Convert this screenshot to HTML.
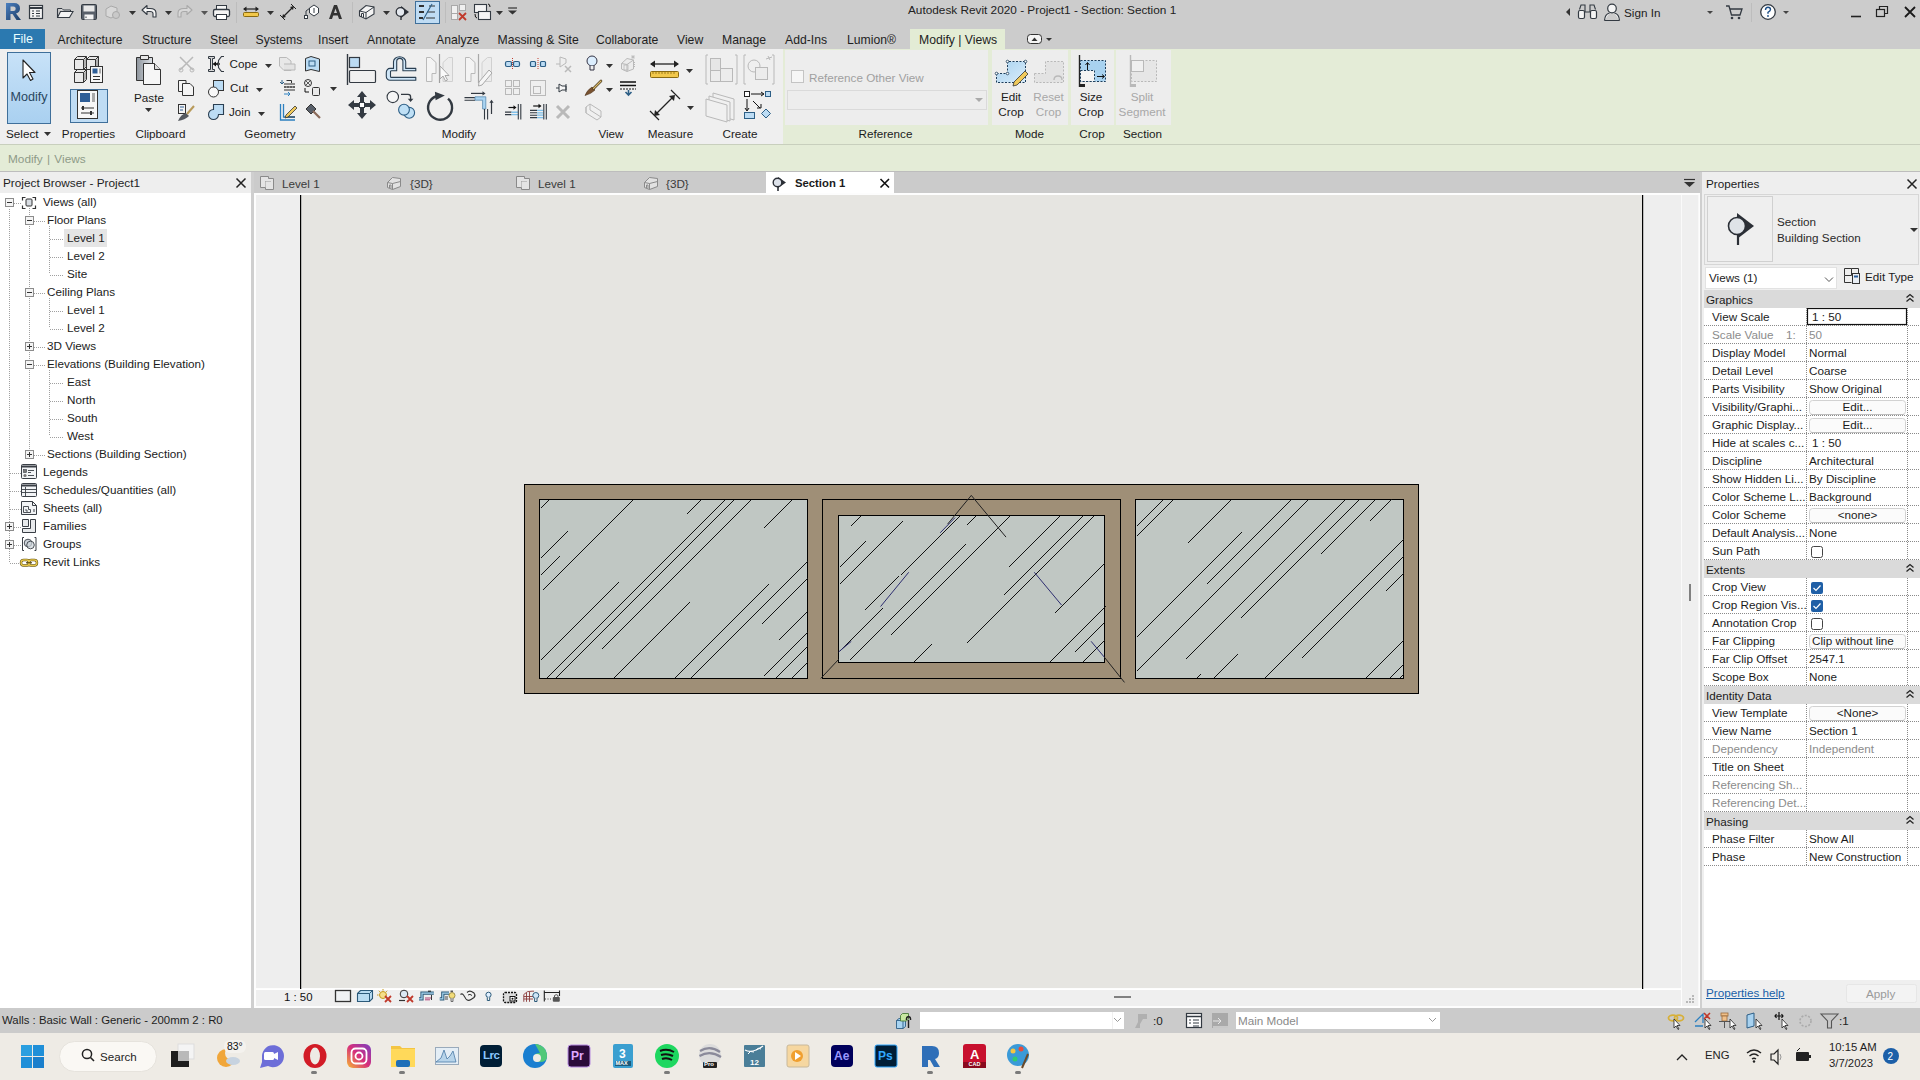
<!DOCTYPE html>
<html><head><meta charset="utf-8">
<style>
*{margin:0;padding:0;box-sizing:border-box}
html,body{width:1920px;height:1080px;overflow:hidden;background:#cccccc;font-family:"Liberation Sans",sans-serif;font-size:12px;color:#1e1e1e}
.a{position:absolute}
.t{position:absolute;white-space:nowrap;line-height:14px}
svg{position:absolute;overflow:visible}
</style></head><body>
<!-- title + tab bar -->
<div class="a" style="left:0;top:0;width:1920px;height:49px;background:#cccccc"></div>
<div class="t" style="left:908px;top:3px;font-size:11.8px;color:#222">Autodesk Revit 2020 - Project1 - Section: Section 1</div>

<!-- tabs -->
<div class="a" style="left:0;top:29px;width:45px;height:20px;background:#2b79b0"></div>
<div class="t" style="left:13px;top:32px;color:#eaffff;font-size:12.4px">File</div>
<div class="a" style="left:910px;top:29px;width:95px;height:20px;background:#e3ecd5;"></div>
<svg class="a" style="left:0;top:0" width="1920" height="50"><defs><linearGradient id="rl" x1="0" y1="0" x2="1" y2="1"><stop offset="0" stop-color="#4a7fc0"/><stop offset="1" stop-color="#1c3d66"/></linearGradient></defs><path d="M6 3H14Q20 3 20 8.5Q20 12.5 16 13.5L21 20H16.5L12.5 14H10.5V20H6Z M10.5 6.5V11H13.5Q15.7 11 15.7 8.7Q15.7 6.5 13.5 6.5Z" fill="url(#rl)" fill-rule="evenodd"/><rect x="29.5" y="5.5" width="13" height="13" fill="#f4f4f4" stroke="#333a42" stroke-width="1.2"/><path d="M29.5 8H42.5" stroke="#333a42" stroke-width="2"/><path d="M32 11H34M32 13.5H34M32 16H34M36 11H40M36 13.5H40M36 16H40" stroke="#333a42"/><path d="M57.5 8.5H62L63.5 10H70.5V12" stroke="#333a42" fill="#e8e8e8"/><path d="M57.5 8.5V17.5H69.5L73 11.5H60.5L57.5 17.5" stroke="#333a42" fill="#f4f4f4" stroke-width="1.1"/><rect x="81.5" y="4.5" width="15" height="15" rx="1" fill="#59606a" stroke="#333a42"/><rect x="83.5" y="5.5" width="11" height="6" fill="#e8e8e8"/><rect x="84.5" y="14.5" width="9" height="5" fill="#f4f4f4"/><path d="M86 16.5V18" stroke="#333a42"/><path d="M106 9L111 6L117 8V15L111 18L106 16Z" fill="#d8d8d8" stroke="#a9a9a9"/><circle cx="116" cy="15" r="3.5" fill="#c9c9c9" stroke="#a9a9a9"/><path d="M129 11H136L132.5 15Z" fill="#333"/><path d="M142 10L147 5.5V8.5H150Q156 8.5 156 13V17H153V13.5Q153 11.5 150 11.5H147V14.5Z" fill="#f4f4f4" stroke="#333a42" stroke-width="1.1" stroke-linejoin="round"/><path d="M165 11H172L168.5 15Z" fill="#333"/><path d="M192 10L187 5.5V8.5H184Q178 8.5 178 13V17H181V13.5Q181 11.5 184 11.5H187V14.5Z" fill="#d8d8d8" stroke="#a9a9a9" stroke-width="1.1" stroke-linejoin="round"/><path d="M201 11H208L204.5 15Z" fill="#555"/><rect x="216.5" y="5.5" width="10" height="4" fill="#f4f4f4" stroke="#333a42"/><rect x="213.5" y="9.5" width="16" height="7" rx="1.5" fill="#f4f4f4" stroke="#333a42" stroke-width="1.3"/><rect x="216.5" y="14.5" width="10" height="5" fill="#fff" stroke="#333a42"/><path d="M236.5 2V23" stroke="#bdbdbd"/><path d="M244 9H258" stroke="#222" stroke-width="1.2"/><path d="M243 9L246.5 6.5V11.5Z M259 9L255.5 6.5V11.5Z" fill="#222"/><rect x="243.5" y="12.5" width="15" height="4" rx="1" fill="#f2c84b" stroke="#8a6a10"/><path d="M267 11H274L270.5 15Z" fill="#333"/><path d="M283 17L293 7" stroke="#222" stroke-width="1.2"/><path d="M280 15L285 20M291 4L296 9" stroke="#222"/><path d="M282 18L283 14L286 17Z M294 6L293 10L290 7Z" fill="#222"/><path d="M306 17V11L310 8" stroke="#333a42" fill="none"/><rect x="304.5" y="15.5" width="3" height="3" fill="#fff" stroke="#333a42"/><path d="M309.5 8L314 5L318.5 8V13L314 16L309.5 13Z" fill="#fff" stroke="#333a42"/><path d="M314 8V13" stroke="#333a42"/><path d="M329 19L334 5H337L342 19H339L337.8 15.5H333.2L332 19Z M334 13H337L335.5 8.5Z" fill="#333" fill-rule="evenodd"/><path d="M352.5 2V23" stroke="#bdbdbd"/><path d="M359.5 11L366 5.5L374 7V14L366 19L359.5 16Z" fill="#f4f4f4" stroke="#333a42" stroke-width="1.1"/><path d="M359.5 11L366 12.5L374 7M366 12.5V19" stroke="#333a42" fill="none"/><path d="M361.5 17V13.5H363.5V17.5" stroke="#333a42" fill="none"/><path d="M383 11H390L386.5 15Z" fill="#333"/><path d="M401 6L409 12L401 18Z" fill="#2b2f36"/><circle cx="400.5" cy="12" r="4.3" fill="#e4e8ee" stroke="#2b2f36" stroke-width="1.3"/><path d="M401 16V20" stroke="#2b2f36" stroke-width="1.4"/><rect x="415.5" y="1.5" width="24" height="22" fill="#bfdcf4" stroke="#3f6f9a"/><path d="M419 6H424M419 12H424M419 18H423" stroke="#333" stroke-width="2.2"/><path d="M429 6H435M427 12H435M426 18H435" stroke="#333" stroke-width="1.1"/><path d="M432 4L423 20" stroke="#2d5f86" stroke-width="1.1"/><path d="M445.5 2V23" stroke="#bdbdbd"/><rect x="451.5" y="5.5" width="6" height="8" fill="#f0f0f0" stroke="#a9a9a9"/><rect x="459.5" y="4.5" width="6" height="6" fill="#f0f0f0" stroke="#a9a9a9"/><rect x="451.5" y="13.5" width="6" height="6" fill="#f0f0f0" stroke="#a9a9a9"/><path d="M459 13L466 20M466 13L459 20" stroke="#c0392b" stroke-width="1.8"/><rect x="474.5" y="4.5" width="12" height="8" fill="#f4f4f4" stroke="#333a42" stroke-width="1.1"/><rect x="478.5" y="11.5" width="12" height="8" fill="#f4f4f4" stroke="#333a42" stroke-width="1.1"/><path d="M488 4Q490 4 490 7M475 14Q475 18 477 18" stroke="#111" fill="none"/><path d="M496 11H503L499.5 15Z" fill="#333"/><path d="M508 8H517" stroke="#333" stroke-width="1.2"/><path d="M508 10.5H517L512.5 14.5Z" fill="#333"/><path d="M1570 8V16L1566 12Z" fill="#333"/><path d="M1579.5 9.5L1581 5H1585V12M1590 12V5H1594L1595.5 9.5" stroke="#333a42" fill="none" stroke-width="1.1"/><rect x="1578.5" y="10.5" width="6" height="8" rx="1.5" fill="#f4f4f4" stroke="#333a42" stroke-width="1.2"/><rect x="1590.5" y="10.5" width="6" height="8" rx="1.5" fill="#f4f4f4" stroke="#333a42" stroke-width="1.2"/><path d="M1584.5 12H1590.5" stroke="#333a42"/><circle cx="1612" cy="8.5" r="4.3" fill="#f4f4f4" stroke="#333a42" stroke-width="1.2"/><path d="M1604.5 20.5Q1605 14 1609.5 13M1619.5 20.5Q1619 14 1614.5 13M1604.5 20.5H1619.5" stroke="#333a42" fill="#f4f4f4" stroke-width="1.2"/><path d="M1707 11H1713L1710 14Z" fill="#444"/><path d="M1726 6H1729L1731.5 15H1740L1742 9H1730" stroke="#333a42" fill="none" stroke-width="1.3"/><circle cx="1732" cy="18" r="1.3" fill="#333a42"/><circle cx="1739" cy="18" r="1.3" fill="#333a42"/><path d="M1751.5 3V22" stroke="#bdbdbd"/><circle cx="1768" cy="12" r="7.3" fill="#fff" stroke="#333a42" stroke-width="1.3"/><path d="M1765.5 10Q1765.5 7.2 1768 7.2Q1770.5 7.2 1770.5 9.5Q1770.5 11 1768 12.3V13.8" stroke="#1d4f86" fill="none" stroke-width="1.4"/><circle cx="1768" cy="16" r="0.9" fill="#1d4f86"/><path d="M1783 11H1789L1786 14Z" fill="#444"/><path d="M1851 16.5H1861" stroke="#222" stroke-width="1.6"/><rect x="1876.5" y="9.5" width="8" height="7" fill="none" stroke="#222" stroke-width="1.2"/><path d="M1879.5 9V6.5H1887.5V13.5H1885" stroke="#222" fill="none" stroke-width="1.2"/><path d="M1905 7L1915 17M1915 7L1905 17" stroke="#1a1a1a" stroke-width="1.8"/><rect x="1027.5" y="34.5" width="14" height="9" rx="3" fill="#f4f4f4" stroke="#333"/><path d="M1031.5 41L1034.5 37.5L1037.5 41Z" fill="#333"/><path d="M1046 38H1052L1049 41Z" fill="#333"/></svg>
<div class="t" style="left:1624px;top:7.10px;font-size:11.7px;line-height:11.7px;color:#222;">Sign In</div>
<div class="t" style="left:57.5px;top:33.67px;font-size:12.2px;line-height:12.2px;color:#1e1e1e;">Architecture</div>
<div class="t" style="left:142px;top:33.67px;font-size:12.2px;line-height:12.2px;color:#1e1e1e;">Structure</div>
<div class="t" style="left:210px;top:33.67px;font-size:12.2px;line-height:12.2px;color:#1e1e1e;">Steel</div>
<div class="t" style="left:255.5px;top:33.67px;font-size:12.2px;line-height:12.2px;color:#1e1e1e;">Systems</div>
<div class="t" style="left:318px;top:33.67px;font-size:12.2px;line-height:12.2px;color:#1e1e1e;">Insert</div>
<div class="t" style="left:367px;top:33.67px;font-size:12.2px;line-height:12.2px;color:#1e1e1e;">Annotate</div>
<div class="t" style="left:436px;top:33.67px;font-size:12.2px;line-height:12.2px;color:#1e1e1e;">Analyze</div>
<div class="t" style="left:497.5px;top:33.67px;font-size:12.2px;line-height:12.2px;color:#1e1e1e;">Massing &amp; Site</div>
<div class="t" style="left:596px;top:33.67px;font-size:12.2px;line-height:12.2px;color:#1e1e1e;">Collaborate</div>
<div class="t" style="left:677px;top:33.67px;font-size:12.2px;line-height:12.2px;color:#1e1e1e;">View</div>
<div class="t" style="left:722px;top:33.67px;font-size:12.2px;line-height:12.2px;color:#1e1e1e;">Manage</div>
<div class="t" style="left:785px;top:33.67px;font-size:12.2px;line-height:12.2px;color:#1e1e1e;">Add-Ins</div>
<div class="t" style="left:847px;top:33.67px;font-size:12.2px;line-height:12.2px;color:#1e1e1e;">Lumion®</div>
<div class="t" style="left:919px;top:33.67px;font-size:12.2px;line-height:12.2px;color:#1e1e1e;">Modify | Views</div>


<!-- ribbon body -->
<div class="a" style="left:0;top:49px;width:1920px;height:96px;background:#e4ecd7"></div>
<div class="a" style="left:0;top:49px;width:783px;height:96px;background:#efefef"></div>
<div class="a" style="left:785px;top:50px;width:203px;height:75px;background:#ededed"></div>
<div class="a" style="left:992px;top:50px;width:76px;height:75px;background:#ededed"></div>
<div class="a" style="left:1071px;top:50px;width:43px;height:75px;background:#ededed"></div>
<div class="a" style="left:1116px;top:50px;width:55px;height:75px;background:#ededed"></div>
<div class="a" style="left:0;top:144px;width:1920px;height:1px;background:#c8cfbd"></div>
<svg class="a" style="left:0;top:0" width="1920" height="160"><defs><linearGradient id="mb" x1="0" y1="0" x2="0" y2="1"><stop offset="0" stop-color="#c8e2f8"/><stop offset="1" stop-color="#a9d0f0"/></linearGradient></defs><rect x="7.5" y="52.5" width="43" height="71" fill="url(#mb)" stroke="#3f6f9a"/><path d="M23 60V78L27 74L30.5 80.5L33 79L29.5 72.5H35Z" fill="#fff" stroke="#222" stroke-width="1.1" stroke-linejoin="round"/><path d="M44 132H51L47.5 136Z" fill="#333"/><path d="M74.5 59.5L77.5 56.5H86.5V66.5L83.5 69.5H74.5Z" fill="#e9e9e9" stroke="#333"/><path d="M74.5 59.5H83.5V69.5M83.5 59.5L86.5 56.5" stroke="#333" fill="none"/><path d="M84 60L86 58V66L84 68Z" fill="#b0b0b0"/><path d="M86.5 59.5L89.5 56.5H98.5V66.5L95.5 69.5H86.5Z" fill="#e9e9e9" stroke="#333"/><path d="M86.5 59.5H95.5V69.5M95.5 59.5L98.5 56.5" stroke="#333" fill="none"/><path d="M96 60L98 58V66L96 68Z" fill="#b0b0b0"/><path d="M74.5 72.5L77.5 69.5H86.5V79.5L83.5 82.5H74.5Z" fill="#e9e9e9" stroke="#333"/><path d="M74.5 72.5H83.5V82.5M83.5 72.5L86.5 69.5" stroke="#333" fill="none"/><path d="M84 73L86 71V79L84 81Z" fill="#b0b0b0"/><rect x="90.5" y="66.5" width="12" height="16" fill="#f7f7f7" stroke="#333"/><rect x="92.5" y="68.5" width="5" height="5" fill="#2e5e97"/><rect x="99" y="68.5" width="2" height="5" fill="#aaa"/><path d="M93 76.5H100M93 79.5H100" stroke="#333"/><rect x="70.5" y="89.5" width="37" height="33" fill="#bfdcf4" stroke="#3f6f9a"/><rect x="77.5" y="90.5" width="20" height="28" fill="#f7f7f7" stroke="#333"/><rect x="80" y="93" width="10" height="9" fill="#2e5e97"/><rect x="92" y="93" width="3" height="9" fill="#aaa"/><path d="M81 108H94M81 113H94" stroke="#333" stroke-width="1.2"/><path d="M83 106V110M91 111V115" stroke="#333" stroke-width="2"/><defs><linearGradient id="pg" x1="0" y1="0" x2="1" y2="0"><stop offset="0" stop-color="#8c939b"/><stop offset="1" stop-color="#dfe3e8"/></linearGradient></defs><path d="M136.5 57.5H152.5V80.5H136.5Z" fill="url(#pg)" stroke="#333"/><path d="M140.5 55.5H148.5V59.5H140.5Z" fill="#e8e8e8" stroke="#333"/><path d="M143.5 63.5H154.5L160.5 69.5V84.5H143.5Z" fill="#f6f6f6" stroke="#333"/><path d="M154.5 63.5V69.5H160.5" fill="#ddd" stroke="#333"/><path d="M145 108H152L148.5 112Z" fill="#333"/><path d="M180 57L193 70M193 57L180 70" stroke="#b9b9b9" stroke-width="1.5"/><circle cx="181" cy="70" r="2" fill="none" stroke="#b9b9b9"/><circle cx="192" cy="70" r="2" fill="none" stroke="#b9b9b9"/><path d="M178.5 80.5H186V91.5H178.5Z" fill="#f4f4f4" stroke="#333"/><path d="M182.5 83.5H190L193.5 87V95.5H182.5Z" fill="#f4f4f4" stroke="#333"/><rect x="178.5" y="104.5" width="7" height="9" fill="#f4f4f4" stroke="#333"/><path d="M180 107H184M180 110H183" stroke="#2e5e97"/><path d="M178 121Q181 114 186 113L189 116Q185 120 178 121Z" fill="#555a60"/><path d="M187 114L194 106" stroke="#b89a5a" stroke-width="2"/><path d="M208.5 56.5H214.5V58.5H212.5V69.5H214.5V71.5H208.5V69.5H210.5V58.5H208.5Z" fill="#d8d8d8" stroke="#333a42" stroke-width="1"/><path d="M224 56.5H221.5L218.5 60.5V62.5L216.5 64L218.5 65.5V67.5L221.5 71.5H224" stroke="#333a42" fill="none" stroke-width="1.1"/><path d="M220 64H214" stroke="#111" stroke-width="1.3"/><path d="M212.5 64L216 61.5V66.5Z" fill="#111"/><path d="M265 64H272L268.5 68Z" fill="#333"/><rect x="213.5" y="80.5" width="10" height="10" fill="#bcdcf4" stroke="#333"/><circle cx="213.5" cy="92" r="5" fill="#f8f8f8" stroke="#333"/><path d="M256 88H263L259.5 92Z" fill="#333"/><path d="M213.5 109.5V104.5H223.5V114.5H218.5A5 5 0 1 1 213.5 109.5Z" fill="#bcdcf4" stroke="#2a3f52" stroke-width="1.1"/><path d="M258 112H265L261.5 116Z" fill="#333"/><path d="M279.5 57.5H286.5L291 61V70.5H284L279.5 66Z" fill="#e8e8e8" stroke="#b9b9b9"/><path d="M284 64H295V70H284" stroke="#b9b9b9" fill="#e3e3e3"/><path d="M284 84H295M284 87H295M284 90H295" stroke="#333" stroke-width="1.1"/><path d="M284 87H295" stroke="#333" stroke-dasharray="2 1"/><path d="M282 80L282 84M280 82L282 84L284 82" stroke="#2d5f86" fill="none"/><path d="M286.5 80.5H291.5V83" stroke="#333" fill="none"/><path d="M284 94H290M288 92L290 94L288 96" stroke="#2d80c0" fill="none"/><path d="M280.5 104V120H295M283.5 104V117H295" stroke="#2d80c0" stroke-width="1.3" fill="none"/><path d="M287 117H295" stroke="#333"/><path d="M286 115L295 106L297 108L288 117L285 118Z" fill="#f0c95a" stroke="#333" stroke-width="0.8"/><path d="M305.5 58.5L311 56.5L319.5 59V71.5L311 69.5L305.5 71Z" fill="#bcdcf4" stroke="#333"/><rect x="309" y="61" width="6" height="5" fill="none" stroke="#2d5f86"/><circle cx="308" cy="83" r="3.5" fill="none" stroke="#333"/><path d="M305.5 80.5L310.5 85.5M310.5 80.5L305.5 85.5" stroke="#333" stroke-width="0.8"/><rect x="312.5" y="87.5" width="7" height="8" rx="1" fill="#e8e8e8" stroke="#333"/><path d="M305 88V92H309" stroke="#111" fill="none"/><path d="M306 109L311 104L316 109L311 114Z" fill="#59606a" stroke="#333"/><path d="M313 111L320 118" stroke="#8a6a5a" stroke-width="2.2"/><path d="M330 87H337L333.5 91Z" fill="#333"/><path d="M347.5 54V85" stroke="#333a42" stroke-width="1.4"/><rect x="349.5" y="57.5" width="10" height="10" fill="#bcdcf4" stroke="#333a42" stroke-width="1.2"/><rect x="349.5" y="70.5" width="26" height="12" rx="1" fill="#f0f0f0" stroke="#333a42" stroke-width="1.2"/><path d="M415.8 68.4H405.7V61.8A6.1 5 0 0 0 393.5 61.8V68.4H390A3.6 4 0 0 0 386.3 72.5V76.5A3.6 3.7 0 0 0 390 80.2H415.8V77.4H391.5A1 1 0 0 1 390.5 76.4V72A1 1 0 0 1 391.5 70.8H396.7V61.5A3 3 0 0 1 402.9 61.5V70.8H415.8Z" fill="#cfe6f8" stroke="#2a3f52" stroke-width="1.1" stroke-linejoin="round"/><path d="M426.5 57.5H430.5L436 62.5V73.5H432V81.5H426.5Z" fill="#f4f4f4" stroke="#b9b9b9"/><path d="M439.5 54V83" stroke="#a0a0a0" stroke-width="1.2"/><path d="M443 62.5L448.5 57.5H452.5V81.5H443Z" fill="#ececec" stroke="#d0d0d0"/><path d="M440 66V79L443 76L445.5 81L447.5 80L445 75.5H449Z" fill="#fafafa" stroke="#a8a8a8" stroke-linejoin="round"/><path d="M465.5 57.5H469.5L475 62.5V73.5H471V81.5H465.5Z" fill="#f4f4f4" stroke="#b9b9b9"/><path d="M478.5 54V83" stroke="#a8a8a8" stroke-width="1.2"/><path d="M482 62.5L487.5 57.5H491.5V81.5H482Z" fill="#ececec" stroke="#d0d0d0"/><path d="M479 82L489 70L492 73L482 85L478.5 86Z" fill="#f6f6f6" stroke="#a8a8a8"/><path d="M362 91L367 97H364V103H360V97H357Z M362 119L367 113H364V107H360V113H357Z M348 105L354 100V103H359V107H354V110Z M376 105L370 100V103H365V107H370V110Z" fill="#333a42"/><rect x="359.5" y="102.5" width="5" height="5" fill="#fff" stroke="#333a42"/><circle cx="392.8" cy="96.9" r="5.7" fill="#f6f6f6" stroke="#333a42" stroke-width="1.1"/><path d="M401 94.4H408Q410.6 94.4 410.6 97V99" stroke="#333a42" stroke-width="1.3" fill="none"/><path d="M407.8 98.8H413.4L410.6 102Z" fill="#333a42"/><circle cx="409.2" cy="112.8" r="5.4" fill="#bfe0f6" stroke="#2d5f86" stroke-width="1.1"/><circle cx="404" cy="109.7" r="5.4" fill="#bfe0f6" stroke="#2d5f86" stroke-width="1.1"/><path d="M444.5 96.5A12 12 0 1 1 435 96.8" stroke="#333a42" stroke-width="2.4" fill="none" transform="rotate(20 440 107.6)"/><path d="M434.9 91.7L444.8 95.6L435.6 100.2Z" fill="#333a42"/><path d="M464.5 97.6H475M464.5 100.3H475" stroke="#333a42" stroke-width="1.1"/><path d="M475 96.8H485.8V109H482.6V100.2H475Z" fill="#a9d4f2" stroke="#5a8ab0" stroke-width="0.8"/><path d="M484.5 109V119.5M487.6 109V119.5" stroke="#333a42" stroke-width="1.1"/><path d="M471 93.4H483" stroke="#333a42" stroke-width="1.2"/><path d="M482.5 91.3L485.5 93.4L482.5 95.5Z" fill="#333a42"/><path d="M491.5 114V102" stroke="#333a42" stroke-width="1.2"/><path d="M489.4 102.8L491.5 99.8L493.6 102.8Z" fill="#333a42"/><rect x="505.5" y="61.5" width="6" height="5" rx="1.5" fill="#bcdcf4" stroke="#2d5f86" stroke-width="1.2"/><rect x="513.5" y="61.5" width="6" height="5" rx="1.5" fill="#bcdcf4" stroke="#2d5f86" stroke-width="1.2"/><path d="M512.5 58V70" stroke="#c0392b" stroke-dasharray="1 1"/><rect x="530.5" y="61.5" width="5" height="5" rx="1" fill="#bcdcf4" stroke="#2d5f86" stroke-width="1.2"/><rect x="540.5" y="61.5" width="5" height="5" rx="1" fill="#bcdcf4" stroke="#2d5f86" stroke-width="1.2"/><path d="M538 58V70" stroke="#c0392b" stroke-dasharray="1 1"/><path d="M556 64H560M560 57V67L566 63V59Z" stroke="#b9b9b9" fill="none"/><path d="M565 66L571 72M571 66L565 72" stroke="#b9b9b9" stroke-width="1.5"/><g fill="none" stroke="#b9b9b9"><rect x="505.5" y="80.5" width="6" height="6"/><rect x="513.5" y="80.5" width="6" height="6"/><rect x="505.5" y="88.5" width="6" height="6"/><rect x="513.5" y="88.5" width="6" height="6"/><rect x="530.5" y="80.5" width="15" height="15"/><rect x="533.5" y="86.5" width="7" height="7"/></g><path d="M556 88H559M559 84V92L562 90H566V86H562Z" stroke="#333a42" fill="#f6f6f6"/><path d="M566 84V92" stroke="#333a42"/><path d="M508.4 107.5H514" stroke="#111" stroke-width="1.2"/><path d="M513.5 105.3L516.5 107.5L513.5 109.7Z" fill="#111"/><path d="M505 112.2H511.5M505 114.6H511.5" stroke="#333a42" stroke-width="1.2"/><path d="M511.5 112.2H518M511.5 114.6H518" stroke="#7fbfe8" stroke-width="1.4"/><path d="M518.3 104V119.5M520.8 104V119.5" stroke="#333a42" stroke-width="1.1"/><path d="M533.2 106H539" stroke="#111" stroke-width="1.2"/><path d="M538.5 103.8L541.5 106L538.5 108.2Z" fill="#111"/><path d="M530 110.4H537M530 112.8H537M530 115.2H537M530 117.6H537" stroke="#333a42" stroke-width="1.1"/><path d="M537 110.4H543.3M537 112.8H543.3M537 115.2H543.3M537 117.6H543.3" stroke="#7fbfe8" stroke-width="1.2"/><path d="M543.8 104V119.5M546.3 104V119.5" stroke="#333a42" stroke-width="1.1"/><path d="M557 106L569 118M569 106L557 118" stroke="#b9b9b9" stroke-width="3"/><circle cx="592" cy="61" r="5" fill="#dceefe" stroke="#334"/><path d="M590 66V70H594V66" stroke="#334" fill="#eee"/><path d="M606 64H613L609.5 68Z" fill="#333"/><path d="M621.5 63.5L627 58.5L633.5 60V69L627 71.5L621.5 69Z" fill="#ececec" stroke="#b9b9b9"/><path d="M621.5 63.5L627 64.5L633.5 60M627 64.5V71.5" stroke="#b9b9b9" fill="none"/><rect x="624" y="65" width="4" height="5" fill="none" stroke="#b9b9b9" stroke-width="0.8"/><path d="M633 55V59M631 57H635M631.6 55.6L634.4 58.4M634.4 55.6L631.6 58.4" stroke="#b9b9b9" stroke-width="0.8"/><path d="M634.5 62V68" stroke="#b9b9b9" stroke-dasharray="1 1"/><path d="M585 95.5Q587 90 592 87L595 90Q591 94 585 95.5Z" fill="#7a5230" stroke="#4a3018" stroke-width="0.6"/><path d="M593.5 88.5L601 81" stroke="#4a3a20" stroke-width="2.6" stroke-linecap="round"/><path d="M593.5 88.5L601 81" stroke="#d8b86a" stroke-width="1.2" stroke-linecap="round"/><path d="M606 88H613L609.5 92Z" fill="#333"/><path d="M620 82H636M620 85.5H636" stroke="#111" stroke-width="1.6"/><path d="M620 89H636" stroke="#111" stroke-dasharray="2 1"/><path d="M628.5 90V94M625.5 92L628.5 95L631.5 92" stroke="#2d5f86" stroke-width="1.6" fill="none"/><path d="M586 107L590 104L601 111V117L597 120L586 113Z" fill="#f0f0f0" stroke="#b9b9b9"/><path d="M586 107V113M590 104V110L601 117" stroke="#b9b9b9" fill="none"/><path d="M651 64H678" stroke="#222" stroke-width="1.3"/><path d="M650 64L655 60.5V67.5Z M679 64L674 60.5V67.5Z" fill="#222"/><rect x="650.5" y="71.5" width="28" height="6" rx="1" fill="#f2c84b" stroke="#8a6a10"/><path d="M653 72V74M656 72V74M659 72V74M662 72V74M665 72V74M668 72V74M671 72V74M674 72V74" stroke="#8a6a10" stroke-width="0.8"/><path d="M686 69H693L689.5 73Z" fill="#333"/><path d="M656 114L673 97" stroke="#222" stroke-width="1.3"/><path d="M650 111L659 120M671 90L680 99" stroke="#222" stroke-width="1.2"/><path d="M654 116L655 110L660 115Z M675 95L674 101L669 96Z" fill="#222"/><path d="M687 106H694L690.5 110Z" fill="#333"/><g fill="none" stroke="#b9b9b9"><path d="M708 55H706V84H708M735 55H737V84H735"/><rect x="710.5" y="58.5" width="10" height="12" fill="#e6e6e6"/><rect x="710.5" y="70.5" width="10" height="11" fill="#ececec"/><rect x="720.5" y="68.5" width="12" height="13" fill="#ececec"/></g><g fill="none" stroke="#b9b9b9"><path d="M746 55H744V84H746M772 55H774V84H772"/><circle cx="754" cy="66" r="6"/><rect x="755.5" y="67.5" width="12" height="12" fill="#ececec"/><path d="M768 56L770 60M772 57L766 59"/></g><g stroke="#b9b9b9" fill="#f0f0f0"><path d="M713 93L734 99V120L713 114Z"/><path d="M709 96L730 102V121L709 115Z"/><path d="M706 99L727 105V122L706 116Z"/></g><rect x="744.5" y="91.5" width="5" height="5" fill="#fff" stroke="#222"/><rect x="765.5" y="91.5" width="5" height="5" fill="#bcdcf4" stroke="#2d5f86"/><path d="M751 94H763M761 92L764 94L761 96" stroke="#111" fill="none"/><path d="M747 99V110M745 108L747 111L749 108" stroke="#111" fill="none"/><path d="M753 101L760 108M757 108H761V104" stroke="#111" fill="none"/><rect x="744.5" y="112.5" width="10" height="6" fill="#bcdcf4" stroke="#2d5f86"/><path d="M766 109L770.5 113.5L766 118L761.5 113.5Z" fill="#bcdcf4" stroke="#2d5f86"/><rect x="791.5" y="70.5" width="12" height="12" fill="#f6f6f6" stroke="#c4c4c4"/><rect x="787.5" y="90.5" width="199" height="19" fill="#ededed" stroke="#dadada"/><path d="M975 98H983L979 102Z" fill="#aaa"/><defs><linearGradient id="cb" x1="0" y1="0" x2="1" y2="1"><stop offset="0" stop-color="#a8d2f0"/><stop offset="1" stop-color="#d9ecfa"/></linearGradient></defs><path d="M996.5 73.5H1007.5V61.5H1025.5V82.5H996.5Z" fill="url(#cb)" stroke="#1d3d5a" stroke-dasharray="2 1.5"/><g fill="#fff" stroke="#1d3d5a" stroke-width="0.8"><circle cx="996.5" cy="73.5" r="1.3"/><circle cx="1007.5" cy="73.5" r="1.3"/><circle cx="1007.5" cy="61.5" r="1.3"/><circle cx="1025.5" cy="61.5" r="1.3"/></g><path d="M1014 82L1025 71L1028 74L1017 85L1013 86Z" fill="#f0c95a" stroke="#333" stroke-width="0.8"/><path d="M1034.5 73.5H1045.5V61.5H1063.5V82.5H1034.5Z" fill="#e3e3e3" stroke="#b9b9b9" stroke-dasharray="2 1.5"/><path d="M1054 80Q1054 76 1058 76Q1062 76 1062 80" stroke="#b9b9b9" fill="none" stroke-width="1.4"/><path d="M1079.5 55V87" stroke="#222" stroke-width="1.4"/><rect x="1079" y="84" width="6" height="3" fill="#222"/><rect x="1080.5" y="60.5" width="25" height="21" fill="#a8d2f0" stroke="#1d3d5a" stroke-dasharray="2 1.5"/><rect x="1080.5" y="70.5" width="14" height="11" fill="#f4f4f4" stroke="#1d3d5a" stroke-dasharray="2 1.5"/><path d="M1087.5 70V63M1085.5 65L1087.5 62.5L1089.5 65M1097 76.5H1104M1102 74.5L1104.5 76.5L1102 78.5" stroke="#111" fill="none"/><path d="M1130.5 55V87" stroke="#b9b9b9" stroke-width="1.4"/><rect x="1130" y="84" width="6" height="3" fill="#b9b9b9"/><rect x="1131.5" y="60.5" width="25" height="21" fill="#e6e6e6" stroke="#b9b9b9" stroke-dasharray="2 1.5"/><rect x="1131.5" y="60.5" width="12" height="11" fill="#f0f0f0" stroke="#b9b9b9"/></svg>
<div class="t" style="left:10.5px;top:90.83px;font-size:12.6px;line-height:12.6px;color:#2a4660;">Modify</div>
<div class="t" style="left:134px;top:91.60px;font-size:11.7px;line-height:11.7px;color:#1b1b1b;">Paste</div>
<div class="t" style="left:6px;top:127.60px;font-size:11.7px;line-height:11.7px;color:#1b1b1b;">Select</div>
<div class="t" style="left:-11.5px;width:200px;text-align:center;top:127.60px;font-size:11.7px;line-height:11.7px;color:#1b1b1b;">Properties</div>
<div class="t" style="left:60.5px;width:200px;text-align:center;top:127.60px;font-size:11.7px;line-height:11.7px;color:#1b1b1b;">Clipboard</div>
<div class="t" style="left:229.5px;top:57.60px;font-size:11.7px;line-height:11.7px;color:#1b1b1b;">Cope</div>
<div class="t" style="left:230px;top:81.60px;font-size:11.7px;line-height:11.7px;color:#1b1b1b;">Cut</div>
<div class="t" style="left:229px;top:105.60px;font-size:11.7px;line-height:11.7px;color:#1b1b1b;">Join</div>
<div class="t" style="left:170px;width:200px;text-align:center;top:127.60px;font-size:11.7px;line-height:11.7px;color:#1b1b1b;">Geometry</div>
<div class="t" style="left:359px;width:200px;text-align:center;top:127.60px;font-size:11.7px;line-height:11.7px;color:#1b1b1b;">Modify</div>
<div class="t" style="left:511px;width:200px;text-align:center;top:127.60px;font-size:11.7px;line-height:11.7px;color:#1b1b1b;">View</div>
<div class="t" style="left:570.5px;width:200px;text-align:center;top:127.60px;font-size:11.7px;line-height:11.7px;color:#1b1b1b;">Measure</div>
<div class="t" style="left:640px;width:200px;text-align:center;top:127.60px;font-size:11.7px;line-height:11.7px;color:#1b1b1b;">Create</div>
<div class="t" style="left:809px;top:72.10px;font-size:11.7px;line-height:11.7px;color:#a0a0a0;">Reference Other View</div>
<div class="t" style="left:785.5px;width:200px;text-align:center;top:127.60px;font-size:11.7px;line-height:11.7px;color:#1b1b1b;">Reference</div>
<div class="t" style="left:911px;width:200px;text-align:center;top:91.10px;font-size:11.7px;line-height:11.7px;color:#1b1b1b;">Edit</div>
<div class="t" style="left:911px;width:200px;text-align:center;top:106.10px;font-size:11.7px;line-height:11.7px;color:#1b1b1b;">Crop</div>
<div class="t" style="left:948.5px;width:200px;text-align:center;top:91.10px;font-size:11.7px;line-height:11.7px;color:#a8a8a8;">Reset</div>
<div class="t" style="left:948.5px;width:200px;text-align:center;top:106.10px;font-size:11.7px;line-height:11.7px;color:#a8a8a8;">Crop</div>
<div class="t" style="left:929.5px;width:200px;text-align:center;top:127.60px;font-size:11.7px;line-height:11.7px;color:#1b1b1b;">Mode</div>
<div class="t" style="left:991px;width:200px;text-align:center;top:91.10px;font-size:11.7px;line-height:11.7px;color:#1b1b1b;">Size</div>
<div class="t" style="left:991px;width:200px;text-align:center;top:106.10px;font-size:11.7px;line-height:11.7px;color:#1b1b1b;">Crop</div>
<div class="t" style="left:992px;width:200px;text-align:center;top:127.60px;font-size:11.7px;line-height:11.7px;color:#1b1b1b;">Crop</div>
<div class="t" style="left:1042px;width:200px;text-align:center;top:91.10px;font-size:11.7px;line-height:11.7px;color:#a8a8a8;">Split</div>
<div class="t" style="left:1042px;width:200px;text-align:center;top:106.10px;font-size:11.7px;line-height:11.7px;color:#a8a8a8;">Segment</div>
<div class="t" style="left:1042.5px;width:200px;text-align:center;top:127.60px;font-size:11.7px;line-height:11.7px;color:#1b1b1b;">Section</div>


<!-- options bar -->
<div class="a" style="left:0;top:145px;width:1920px;height:26px;background:#e4ecd7"></div>
<div class="t" style="left:8px;top:152px;color:#8e9a88;font-size:11.8px;word-spacing:1px">Modify | Views</div>
<div class="a" style="left:0;top:171px;width:1920px;height:1px;background:#bdbdbd"></div>

<!-- project browser -->
<div class="a" style="left:0;top:172px;width:251px;height:836px;background:#ffffff"></div>
<div class="a" style="left:0;top:172px;width:251px;height:21px;background:#eeeeee"></div>
<div class="t" style="left:3px;top:176px;font-size:11.8px">Project Browser - Project1</div>
<svg class="a" style="left:0;top:0" width="260" height="200"><path d="M236.5 178.5L245.5 187.5M245.5 178.5L236.5 187.5" stroke="#222" stroke-width="1.5"/></svg>
<div class="a" style="left:64px;top:229px;width:43px;height:18px;background:#e5e5e5;"></div>
<div class="t" style="left:43px;top:196.10px;font-size:11.7px;line-height:11.7px;color:#1b1b1b;">Views (all)</div>
<div class="t" style="left:47px;top:214.10px;font-size:11.7px;line-height:11.7px;color:#1b1b1b;">Floor Plans</div>
<div class="t" style="left:67px;top:232.10px;font-size:11.7px;line-height:11.7px;color:#1b1b1b;">Level 1</div>
<div class="t" style="left:67px;top:250.10px;font-size:11.7px;line-height:11.7px;color:#1b1b1b;">Level 2</div>
<div class="t" style="left:67px;top:268.10px;font-size:11.7px;line-height:11.7px;color:#1b1b1b;">Site</div>
<div class="t" style="left:47px;top:286.10px;font-size:11.7px;line-height:11.7px;color:#1b1b1b;">Ceiling Plans</div>
<div class="t" style="left:67px;top:304.10px;font-size:11.7px;line-height:11.7px;color:#1b1b1b;">Level 1</div>
<div class="t" style="left:67px;top:322.10px;font-size:11.7px;line-height:11.7px;color:#1b1b1b;">Level 2</div>
<div class="t" style="left:47px;top:340.10px;font-size:11.7px;line-height:11.7px;color:#1b1b1b;">3D Views</div>
<div class="t" style="left:47px;top:358.10px;font-size:11.7px;line-height:11.7px;color:#1b1b1b;">Elevations (Building Elevation)</div>
<div class="t" style="left:67px;top:376.10px;font-size:11.7px;line-height:11.7px;color:#1b1b1b;">East</div>
<div class="t" style="left:67px;top:394.10px;font-size:11.7px;line-height:11.7px;color:#1b1b1b;">North</div>
<div class="t" style="left:67px;top:412.10px;font-size:11.7px;line-height:11.7px;color:#1b1b1b;">South</div>
<div class="t" style="left:67px;top:430.10px;font-size:11.7px;line-height:11.7px;color:#1b1b1b;">West</div>
<div class="t" style="left:47px;top:448.10px;font-size:11.7px;line-height:11.7px;color:#1b1b1b;">Sections (Building Section)</div>
<div class="t" style="left:43px;top:466.10px;font-size:11.7px;line-height:11.7px;color:#1b1b1b;">Legends</div>
<div class="t" style="left:43px;top:484.10px;font-size:11.7px;line-height:11.7px;color:#1b1b1b;">Schedules/Quantities (all)</div>
<div class="t" style="left:43px;top:502.10px;font-size:11.7px;line-height:11.7px;color:#1b1b1b;">Sheets (all)</div>
<div class="t" style="left:43px;top:520.10px;font-size:11.7px;line-height:11.7px;color:#1b1b1b;">Families</div>
<div class="t" style="left:43px;top:538.10px;font-size:11.7px;line-height:11.7px;color:#1b1b1b;">Groups</div>
<div class="t" style="left:43px;top:556.10px;font-size:11.7px;line-height:11.7px;color:#1b1b1b;">Revit Links</div>
<svg class="a" style="left:0;top:0" width="260" height="600"><path d="M9.5 209V562M29.5 208V454M49.5 226V274M49.5 298V328M49.5 370V436" stroke="#a0a0a0" stroke-width="1" stroke-dasharray="1 1" fill="none"/><rect x="5.5" y="198.5" width="8" height="8" fill="#f4f4f4" stroke="#8c8c8c"/><path d="M7 202.5H12" stroke="#333"/><rect x="25.5" y="216.5" width="8" height="8" fill="#f4f4f4" stroke="#8c8c8c"/><path d="M27 220.5H32" stroke="#333"/><rect x="25.5" y="288.5" width="8" height="8" fill="#f4f4f4" stroke="#8c8c8c"/><path d="M27 292.5H32" stroke="#333"/><rect x="25.5" y="342.5" width="8" height="8" fill="#f4f4f4" stroke="#8c8c8c"/><path d="M27 346.5H32" stroke="#333"/><path d="M29.5 344V349" stroke="#333"/><rect x="25.5" y="360.5" width="8" height="8" fill="#f4f4f4" stroke="#8c8c8c"/><path d="M27 364.5H32" stroke="#333"/><rect x="25.5" y="450.5" width="8" height="8" fill="#f4f4f4" stroke="#8c8c8c"/><path d="M27 454.5H32" stroke="#333"/><path d="M29.5 452V457" stroke="#333"/><rect x="5.5" y="522.5" width="8" height="8" fill="#f4f4f4" stroke="#8c8c8c"/><path d="M7 526.5H12" stroke="#333"/><path d="M9.5 524V529" stroke="#333"/><rect x="5.5" y="540.5" width="8" height="8" fill="#f4f4f4" stroke="#8c8c8c"/><path d="M7 544.5H12" stroke="#333"/><path d="M9.5 542V547" stroke="#333"/><path d="M14 203.5H21 M34 221.5H45 M50 239.5H64 M50 257.5H64 M50 275.5H64 M34 293.5H45 M50 311.5H64 M50 329.5H64 M34 347.5H45 M34 365.5H45 M50 383.5H64 M50 401.5H64 M50 419.5H64 M50 437.5H64 M34 455.5H45 M10 473.5H21 M10 491.5H21 M10 509.5H21 M14 527.5H21 M14 545.5H21 M10 563.5H21" stroke="#a0a0a0" stroke-width="1" stroke-dasharray="1 1" fill="none"/><path d="M22.5 200.5V197.5H25.5M32.5 197.5H35.5V200.5M35.5 205.5V208.5H32.5M25.5 208.5H22.5V205.5" stroke="#333" fill="none" stroke-width="1.2"/><rect x="26" y="199" width="6" height="7" rx="1" fill="#d8dde3" stroke="#333"/><rect x="21.5" y="464.5" width="15" height="14" rx="1" fill="#f2f4f6" stroke="#3a3f46"/><path d="M21.5 466.5H36.5" stroke="#3a3f46" stroke-width="2"/><rect x="23.5" y="469.5" width="3" height="3" fill="#777" stroke="#3a3f46" stroke-width="0.6"/><circle cx="25" cy="475.5" r="1.6" fill="#777"/><path d="M28 470.5H34M28 472.5H31M28 475.5H34" stroke="#3a3f46" stroke-width="0.9"/><rect x="21.5" y="483.5" width="15" height="13" rx="1" fill="#f2f4f6" stroke="#3a3f46"/><path d="M21.5 485.5H36.5" stroke="#3a3f46" stroke-width="2"/><path d="M21.5 489.5H36.5M21.5 492.5H36.5M25.5 487V496" stroke="#3a3f46" stroke-width="0.9"/><path d="M21.5 501.5H32.5L36.5 505.5V514.5H21.5Z" fill="#f2f4f6" stroke="#3a3f46"/><path d="M32.5 501.5V505.5H36.5" stroke="#3a3f46" fill="none"/><path d="M23.5 512.5V506.5H28.5V509.5H30.5V512.5ZM25 510H27V512" stroke="#3a3f46" fill="none" stroke-width="0.9"/><path d="M34 509V512" stroke="#3a3f46"/><path d="M22.5 519.5H28.5V526.5H22.5Z" fill="#e8eaec" stroke="#3a3f46"/><path d="M30.5 519.5H35.5V532.5H22.5V528.5H30.5Z" fill="#e8eaec" stroke="#3a3f46"/><path d="M24 537.5H22.5V550.5H24M34.5 537.5H36V550.5H34.5" stroke="#3a3f46" fill="none"/><circle cx="28" cy="543" r="3.8" fill="#cfd5dc" stroke="#3a3f46" stroke-width="0.9"/><circle cx="30.5" cy="545" r="3.8" fill="#cfd5dc" stroke="#3a3f46" stroke-width="0.9" fill-opacity="0.7"/><rect x="21" y="560" width="8.5" height="5.5" rx="2.7" fill="none" stroke="#5a4a10" stroke-width="2.4"/><rect x="28.5" y="560" width="8.5" height="5.5" rx="2.7" fill="none" stroke="#5a4a10" stroke-width="2.4"/><rect x="21" y="560" width="8.5" height="5.5" rx="2.7" fill="none" stroke="#e8c84a" stroke-width="1.3"/><rect x="28.5" y="560" width="8.5" height="5.5" rx="2.7" fill="none" stroke="#e8c84a" stroke-width="1.3"/><path d="M26 562.75H32" stroke="#5a4a10" stroke-width="1.2"/></svg>

<div class="a" style="left:251px;top:172px;width:3px;height:836px;background:#cfcfcf"></div>

<!-- view tab strip -->
<div class="a" style="left:254px;top:172px;width:1446px;height:21px;background:#cbcbcb"></div>
<div class="a" style="left:766px;top:172px;width:128px;height:21px;background:#ffffff"></div>

<!-- canvas -->
<div class="a" style="left:254px;top:193px;width:1446px;height:815px;background:#fdfdfd"></div>
<div class="a" style="left:256px;top:195px;width:1425px;height:793px;background:#eeeeee"></div>
<div class="a" style="left:301px;top:195px;width:1341px;height:793px;background:#e6e5e1"></div>
<div class="a" style="left:300px;top:195px;width:1px;height:794px;background:#000"></div><div class="a" style="left:301px;top:195px;width:1px;height:794px;background:#b8b8b6"></div>
<div class="a" style="left:1642px;top:195px;width:1px;height:794px;background:#000"></div><div class="a" style="left:1643px;top:195px;width:1px;height:794px;background:#bbbbbb"></div>

<svg class="a" style="left:0;top:0" width="1920" height="1080" viewBox="0 0 1920 1080">
<rect x="524.5" y="484.5" width="894" height="209" fill="#9f8f77" stroke="#000" stroke-width="1" shape-rendering="crispEdges"/>
<rect x="539.5" y="499.5" width="268" height="179" fill="#c0c7c3" stroke="#000" stroke-width="1" shape-rendering="crispEdges"/>
<rect x="822.5" y="499.5" width="298" height="179" fill="#9f8f77" stroke="#000" stroke-width="1" shape-rendering="crispEdges"/>
<rect x="838.5" y="515.5" width="266" height="147" fill="#c0c7c3" stroke="#000" stroke-width="1" shape-rendering="crispEdges"/>
<rect x="1135.5" y="499.5" width="268" height="179" fill="#c0c7c3" stroke="#000" stroke-width="1" shape-rendering="crispEdges"/>
<path d="M540.5 508.5L548.5 500.5 M540.5 558.5L567.5 531.5 M540.5 575.5L559.5 556.5 M542.5 590.5L632.5 500.5 M540.5 660.5L618.5 582.5 M546.5 678.5L724.5 500.5 M555.5 678.5L733.5 500.5 M601.5 649.5L750.5 500.5 M613.5 678.5L689.5 602.5 M686.5 514.5L700.5 500.5 M674.5 678.5L768.5 584.5 M690.5 678.5L807.5 561.5 M763.5 528.5L791.5 500.5 M761.5 624.5L807.5 578.5 M778.5 640.5L806.5 612.5 M763.5 676.5L807.5 632.5 M775.5 678.5L807.5 646.5 M791.5 678.5L807.5 662.5 M850.5 526.5L860.5 516.5 M839.5 567.5L865.5 541.5 M839.5 584.5L902.5 521.5 M864.5 610.5L898.5 576.5 M900.5 575.5L959.5 516.5 M839.5 651.5L882.5 608.5 M849.5 660.5L965.5 544.5 M890.5 635.5L1009.5 516.5 M913.5 662.5L931.5 644.5 M966.5 525.5L975.5 516.5 M966.5 643.5L1093.5 516.5 M1008.5 567.5L1059.5 516.5 M1003.5 595.5L1083.5 515.5 M1054.5 613.5L1104.5 563.5 M1049.5 662.5L1105.5 606.5 M1074.5 652.5L1103.5 623.5 M1082.5 662.5L1104.5 640.5 M1136.5 526.5L1162.5 500.5 M1136.5 536.5L1172.5 500.5 M1187.5 543.5L1230.5 500.5 M1136.5 637.5L1241.5 532.5 M1206.5 584.5L1290.5 500.5 M1136.5 671.5L1307.5 500.5 M1185.5 659.5L1344.5 500.5 M1240.5 618.5L1358.5 500.5 M1320.5 554.5L1374.5 500.5 M1369.5 521.5L1391.5 499.5 M1213.5 678.5L1237.5 654.5 M1196.5 678.5L1200.5 674.5 M1264.5 678.5L1403.5 539.5 M1301.5 658.5L1403.5 556.5 M1385.5 591.5L1403.5 573.5 M1365.5 678.5L1403.5 640.5 M1389.5 678.5L1403.5 664.5 M1399.5 678.5L1403.5 674.5" stroke="#111" stroke-width="1" fill="none" shape-rendering="crispEdges"/>
<path d="M947.6 524.1L971.3 495.4 M971.3 495.4L1006.0 537.1 M820.8 678.4L838.7 659.3 M1104.1 656.9L1124.5 682.4" stroke="#222" stroke-width="1" fill="none"/>
<path d="M940.2 532.8L955.0 517.6 M880.6 606.5L908.7 572.3 M1034.3 572.3L1061.5 605.0 M1091.1 641.3L1104.1 656.9 M838.7 651.9L851.3 641.3" stroke="#2e2e70" stroke-width="1" fill="none"/>
</svg>
<div class="t" style="left:282px;top:177.60px;font-size:11.7px;line-height:11.7px;color:#3a3a3a;">Level 1</div>
<div class="t" style="left:410px;top:177.60px;font-size:11.7px;line-height:11.7px;color:#3a3a3a;">{3D}</div>
<div class="t" style="left:538px;top:177.60px;font-size:11.7px;line-height:11.7px;color:#3a3a3a;">Level 1</div>
<div class="t" style="left:666px;top:177.60px;font-size:11.7px;line-height:11.7px;color:#3a3a3a;">{3D}</div>
<div class="t" style="left:795px;top:177.93px;font-size:11.3px;line-height:11.3px;color:#1b1b1b;font-weight:bold">Section 1</div>
<div class="a" style="left:256px;top:989px;width:1425px;height:1px;background:#ffffff;"></div>
<div class="a" style="left:256px;top:990px;width:1425px;height:16px;background:#efefef;"></div>
<div class="a" style="left:1682px;top:195px;width:17px;height:811px;background:#efefef;"></div>
<div class="a" style="left:1698px;top:195px;width:1px;height:811px;background:#f8f8f8;"></div>
<div class="t" style="left:284px;top:992.35px;font-size:11.4px;line-height:11.4px;color:#111;">1 : 50</div>
<div class="a" style="left:1114px;top:996px;width:17px;height:2px;background:#808080;"></div>
<div class="a" style="left:1689px;top:584px;width:2px;height:17px;background:#808080;"></div>
<div class="a" style="left:1681px;top:195px;width:1px;height:793px;background:#fafafa;"></div>
<svg class="a" style="left:0;top:0" width="1920" height="1080"><path d="M260.5 176.5H268.5V178.5H273.5V189.5H265.5V187.5H260.5Z" fill="#e4e4e4" stroke="#8a8a8a"/><path d="M265.5 181.5V187M265.5 181.5H271" stroke="#9a9a9a" stroke-dasharray="1 1"/><path d="M387.5 182.5L392.5 177.5L400.5 178.5L400.5 186.5L392.5 189.5L387.5 187.5Z" fill="#e2e2e2" stroke="#8a8a8a"/><path d="M387.5 182.5L392.5 183.5L400.5 181.5M392.5 183.5V189.5" stroke="#8a8a8a" fill="none"/><path d="M389.5 188V185H391V188.5" stroke="#8a8a8a" fill="none"/><path d="M516.5 176.5H524.5V178.5H529.5V189.5H521.5V187.5H516.5Z" fill="#e4e4e4" stroke="#8a8a8a"/><path d="M521.5 181.5V187M521.5 181.5H527" stroke="#9a9a9a" stroke-dasharray="1 1"/><path d="M644.5 182.5L649.5 177.5L657.5 178.5L657.5 186.5L649.5 189.5L644.5 187.5Z" fill="#e2e2e2" stroke="#8a8a8a"/><path d="M644.5 182.5L649.5 183.5L657.5 181.5M649.5 183.5V189.5" stroke="#8a8a8a" fill="none"/><path d="M646.5 188V185H648V188.5" stroke="#8a8a8a" fill="none"/><path d="M778 177L786 182.5L778 188Z" fill="#2b2f36"/><circle cx="777.5" cy="182.5" r="4.3" fill="#dde2ea" stroke="#2b2f36" stroke-width="1.4"/><path d="M778 187V191" stroke="#2b2f36" stroke-width="1.6"/><path d="M880.5 179L889 187.5M889 179L880.5 187.5" stroke="#111" stroke-width="1.6"/><path d="M1684 179.5H1695" stroke="#333" stroke-width="1.2"/><path d="M1684 182H1695L1689.5 187Z" fill="#333"/><g fill="#b8b8b8"><rect x="1692" y="995" width="2" height="2"/><rect x="1689" y="998" width="2" height="2"/><rect x="1692" y="998" width="2" height="2"/><rect x="1686" y="1001" width="2" height="2"/><rect x="1689" y="1001" width="2" height="2"/><rect x="1692" y="1001" width="2" height="2"/></g><rect x="335.5" y="990.5" width="15" height="11" fill="#f0f2f4" stroke="#333" stroke-width="1.3"/><path d="M357.5 993.5L360.5 990.5H372.5V998.5L369.5 1001.5H357.5Z" fill="#b9dcf2" stroke="#2c5a7a" stroke-width="1.1"/><path d="M357.5 993.5H369.5V1001.5M369.5 993.5L372.5 990.5" stroke="#2c5a7a" fill="none"/><circle cx="383" cy="995" r="3.5" fill="#f5df8a" stroke="#c69a1c"/><path d="M383 989V990.5M377 995H378.5M378.8 990.8L379.8 991.8M387.2 990.8L386.2 991.8" stroke="#c69a1c"/><path d="M385 996L391 1002M391 996L385 1002" stroke="#c0392b" stroke-width="1.8"/><circle cx="404" cy="994" r="3.8" fill="#dbe9f4" stroke="#333"/><path d="M399 1000.5H405" stroke="#333" stroke-width="1.2"/><path d="M407 996L413 1002M413 996L407 1002" stroke="#c0392b" stroke-width="1.8"/><path d="M419 998.8H422V993.2H433.8" stroke="#2c5a7a" stroke-width="3.2" fill="none"/><path d="M419 998.8H422V993.2H433.8" stroke="#a9d6f0" stroke-width="1.2" fill="none"/><path d="M428 991.2H431" stroke="#111"/><path d="M425 998H431M425 999.8H430" stroke="#b0306a" stroke-width="0.9"/><path d="M431.5 995V1000" stroke="#222" stroke-width="0.9"/><path d="M439.8 998.8H442.8V993.2H449" stroke="#2c5a7a" stroke-width="3.2" fill="none"/><path d="M439.8 998.8H442.8V993.2H449" stroke="#a9d6f0" stroke-width="1.2" fill="none"/><path d="M445 997H448M445 999H448" stroke="#333" stroke-width="0.9"/><path d="M450.5 991.2H453" stroke="#111"/><circle cx="452" cy="995.5" r="3" fill="#f2dc7a" stroke="#8a7a3a" stroke-width="0.8"/><path d="M451 998.3V1001.5H453V998.3" stroke="#555" fill="#ddd" stroke-width="0.8"/><path d="M460.5 994.5Q462 993 463.5 995L466 999Q468 1001.5 471 999.5L474 997.5Q476 995.5 474 993L471.5 991.5Q469 990.5 467 992.5" stroke="#333" fill="none" stroke-width="1.1"/><path d="M468 995Q470 993.5 472 995.5" stroke="#333" fill="none"/><circle cx="488.5" cy="994.8" r="2.6" fill="#dfefff" stroke="#2c5a7a"/><path d="M487.3 997.3V1000.5H489.7V997.3" stroke="#2c5a7a" fill="#eee"/><rect x="503.5" y="992.5" width="13" height="10" rx="1.5" fill="#dcdcdc" stroke="#111" stroke-width="1.3" stroke-dasharray="2 1"/><rect x="510" y="996.5" width="5" height="4.5" fill="#fff" stroke="#111"/><circle cx="512.5" cy="998.7" r="1" fill="#111"/><path d="M523.8 1001.8V994.5Q527 990.5 532 991.2H534M526.5 1001.8V993M529.5 1001.8V992M523.8 996.5H533M523.8 999H533" stroke="#8a3a3a" fill="none" stroke-width="0.9"/><circle cx="535.8" cy="995.5" r="3" fill="#cfe6f7" stroke="#2c5a7a"/><path d="M534.6 998.3V1001.5H537V998.3" stroke="#2c5a7a" fill="#eee"/><path d="M544.3 990.5V1001.5M559.5 990.5V996M544.3 992.5H559.5" stroke="#222" stroke-width="1.1"/><path d="M545 999H552" stroke="#444" stroke-dasharray="1 1.5"/><rect x="552.8" y="997" width="7" height="4.8" rx="1" fill="#555"/><path d="M554.5 997V995.5Q556.3 993.8 558 995.5V997" stroke="#555" fill="none"/></svg>

<!-- properties -->
<div class="a" style="left:1700px;top:172px;width:2px;height:836px;background:#cfcfcf"></div>
<div class="a" style="left:1702px;top:172px;width:218px;height:21px;background:#eeeeee"></div>
<div class="a" style="left:1702px;top:193px;width:218px;height:815px;background:#efefef;"></div>
<div class="t" style="left:1706px;top:178.10px;font-size:11.7px;line-height:11.7px;color:#1b1b1b;">Properties</div>
<svg class="a" style="left:0;top:0" width="1920" height="1080"><path d="M1907.5 179.5L1916.5 188.5M1916.5 179.5L1907.5 188.5" stroke="#222" stroke-width="1.5"/><rect x="1704.5" y="194.5" width="214" height="70" fill="#eeeeee" stroke="#d6d6d6"/><rect x="1707.5" y="196.5" width="65" height="65" fill="#efefef" stroke="#d0d0d0"/><path d="M1737 213L1754 226L1737 239Z" fill="#2b2f36"/><circle cx="1737" cy="226" r="8.5" fill="#dfe3e8" stroke="#2b2f36" stroke-width="1.6"/><path d="M1738 234V245" stroke="#2b2f36" stroke-width="2.2"/><path d="M1910 228H1918L1914 232Z" fill="#333"/><rect x="1705.5" y="267.5" width="131" height="21" fill="#ffffff" stroke="#e2e2e2"/><path d="M1825 277.5L1829 281.5L1833 277.5" stroke="#555" fill="none"/><path d="M1844.5 268.5H1851.5V275.5H1844.5ZM1844.5 275.5V282.5H1851.5M1851.5 268.5H1858.5V273.5" stroke="#333" fill="none"/><rect x="1852.5" y="273.5" width="7" height="10" fill="#e9eef4" stroke="#333"/><path d="M1854 276.5H1858" stroke="#2a5d9a" stroke-width="2"/></svg>
<div class="t" style="left:1777px;top:216.10px;font-size:11.7px;line-height:11.7px;color:#2a2a2a;">Section</div>
<div class="t" style="left:1777px;top:232.10px;font-size:11.7px;line-height:11.7px;color:#2a2a2a;">Building Section</div>
<div class="t" style="left:1709px;top:272.10px;font-size:11.7px;line-height:11.7px;color:#1b1b1b;">Views (1)</div>
<div class="t" style="left:1865px;top:271.10px;font-size:11.7px;line-height:11.7px;color:#1b1b1b;">Edit Type</div>
<div class="a" style="left:1704px;top:290px;width:216px;height:576px;background:#ffffff;"></div>
<svg class="a" style="left:0;top:0" width="1920" height="1080"><rect x="1807.5" y="308.5" width="99" height="16" fill="#fff" stroke="#111" stroke-width="1.2"/><rect x="1809.5" y="400.5" width="96" height="14" rx="3" fill="#fbfbfb" stroke="#d2d2d2"/><path d="M1811 414.5H1904" stroke="#bdbdbd"/><rect x="1809.5" y="418.5" width="96" height="14" rx="3" fill="#fbfbfb" stroke="#d2d2d2"/><path d="M1811 432.5H1904" stroke="#bdbdbd"/><rect x="1809.5" y="508.5" width="96" height="14" rx="3" fill="#fbfbfb" stroke="#d2d2d2"/><path d="M1811 522.5H1904" stroke="#bdbdbd"/><rect x="1811.5" y="546.5" width="11" height="11" rx="2" fill="#fff" stroke="#444"/><rect x="1811" y="582" width="12" height="12" rx="2" fill="#1f5fa6"/><path d="M1813.5 588L1816 590.5L1820.5 585.5" stroke="#fff" stroke-width="1.2" fill="none"/><rect x="1811" y="600" width="12" height="12" rx="2" fill="#1f5fa6"/><path d="M1813.5 606L1816 608.5L1820.5 603.5" stroke="#fff" stroke-width="1.2" fill="none"/><rect x="1811.5" y="618.5" width="11" height="11" rx="2" fill="#fff" stroke="#444"/><rect x="1809.5" y="634.5" width="96" height="14" rx="3" fill="#fbfbfb" stroke="#d2d2d2"/><path d="M1811 648.5H1904" stroke="#bdbdbd"/><rect x="1809.5" y="706.5" width="96" height="14" rx="3" fill="#fbfbfb" stroke="#d2d2d2"/><path d="M1811 720.5H1904" stroke="#bdbdbd"/><path d="M1704 325.5H1920 M1806.5 308V326M1907.5 308V326 M1704 343.5H1920 M1806.5 326V344M1907.5 326V344 M1704 361.5H1920 M1806.5 344V362M1907.5 344V362 M1704 379.5H1920 M1806.5 362V380M1907.5 362V380 M1704 397.5H1920 M1806.5 380V398M1907.5 380V398 M1704 415.5H1920 M1806.5 398V416M1907.5 398V416 M1704 433.5H1920 M1806.5 416V434M1907.5 416V434 M1704 451.5H1920 M1806.5 434V452M1907.5 434V452 M1704 469.5H1920 M1806.5 452V470M1907.5 452V470 M1704 487.5H1920 M1806.5 470V488M1907.5 470V488 M1704 505.5H1920 M1806.5 488V506M1907.5 488V506 M1704 523.5H1920 M1806.5 506V524M1907.5 506V524 M1704 541.5H1920 M1806.5 524V542M1907.5 524V542 M1704 559.5H1920 M1806.5 542V560M1907.5 542V560 M1704 595.5H1920 M1806.5 578V596M1907.5 578V596 M1704 613.5H1920 M1806.5 596V614M1907.5 596V614 M1704 631.5H1920 M1806.5 614V632M1907.5 614V632 M1704 649.5H1920 M1806.5 632V650M1907.5 632V650 M1704 667.5H1920 M1806.5 650V668M1907.5 650V668 M1704 685.5H1920 M1806.5 668V686M1907.5 668V686 M1704 721.5H1920 M1806.5 704V722M1907.5 704V722 M1704 739.5H1920 M1806.5 722V740M1907.5 722V740 M1704 757.5H1920 M1806.5 740V758M1907.5 740V758 M1704 775.5H1920 M1806.5 758V776M1907.5 758V776 M1704 793.5H1920 M1806.5 776V794M1907.5 776V794 M1704 811.5H1920 M1806.5 794V812M1907.5 794V812 M1704 847.5H1920 M1806.5 830V848M1907.5 830V848 M1704 865.5H1920 M1806.5 848V866M1907.5 848V866" stroke="#8a8a8a" stroke-width="1" stroke-dasharray="1 1" fill="none"/></svg>
<div class="a" style="left:1704px;top:290px;width:216px;height:18px;background:#dadada;"></div>
<div class="t" style="left:1706px;top:294.10px;font-size:11.7px;line-height:11.7px;color:#1b1b1b;">Graphics</div>
<div class="t" style="left:1712px;top:310.60px;font-size:11.7px;line-height:11.7px;color:#1b1b1b;">View Scale</div>
<div class="t" style="left:1812px;top:310.60px;font-size:11.7px;line-height:11.7px;color:#1b1b1b;">1 : 50</div>
<div class="t" style="left:1712px;top:328.60px;font-size:11.7px;line-height:11.7px;color:#8c8c8c;">Scale Value</div>
<div class="t" style="left:1786px;top:328.60px;font-size:11.7px;line-height:11.7px;color:#8c8c8c;">1:</div>
<div class="t" style="left:1809px;top:328.60px;font-size:11.7px;line-height:11.7px;color:#8c8c8c;">50</div>
<div class="t" style="left:1712px;top:346.60px;font-size:11.7px;line-height:11.7px;color:#1b1b1b;">Display Model</div>
<div class="t" style="left:1809px;top:346.60px;font-size:11.7px;line-height:11.7px;color:#1b1b1b;">Normal</div>
<div class="t" style="left:1712px;top:364.60px;font-size:11.7px;line-height:11.7px;color:#1b1b1b;">Detail Level</div>
<div class="t" style="left:1809px;top:364.60px;font-size:11.7px;line-height:11.7px;color:#1b1b1b;">Coarse</div>
<div class="t" style="left:1712px;top:382.60px;font-size:11.7px;line-height:11.7px;color:#1b1b1b;">Parts Visibility</div>
<div class="t" style="left:1809px;top:382.60px;font-size:11.7px;line-height:11.7px;color:#1b1b1b;">Show Original</div>
<div class="t" style="left:1712px;top:400.60px;font-size:11.7px;line-height:11.7px;color:#1b1b1b;">Visibility/Graphi...</div>
<div class="t" style="left:1809px;width:97px;text-align:center;top:400.60px;font-size:11.7px;line-height:11.7px;color:#1b1b1b">Edit...</div>
<div class="t" style="left:1712px;top:418.60px;font-size:11.7px;line-height:11.7px;color:#1b1b1b;">Graphic Display...</div>
<div class="t" style="left:1809px;width:97px;text-align:center;top:418.60px;font-size:11.7px;line-height:11.7px;color:#1b1b1b">Edit...</div>
<div class="t" style="left:1712px;top:436.60px;font-size:11.7px;line-height:11.7px;color:#1b1b1b;">Hide at scales c...</div>
<div class="t" style="left:1812px;top:436.60px;font-size:11.7px;line-height:11.7px;color:#1b1b1b;">1 : 50</div>
<div class="t" style="left:1712px;top:454.60px;font-size:11.7px;line-height:11.7px;color:#1b1b1b;">Discipline</div>
<div class="t" style="left:1809px;top:454.60px;font-size:11.7px;line-height:11.7px;color:#1b1b1b;">Architectural</div>
<div class="t" style="left:1712px;top:472.60px;font-size:11.7px;line-height:11.7px;color:#1b1b1b;">Show Hidden Li...</div>
<div class="t" style="left:1809px;top:472.60px;font-size:11.7px;line-height:11.7px;color:#1b1b1b;">By Discipline</div>
<div class="t" style="left:1712px;top:490.60px;font-size:11.7px;line-height:11.7px;color:#1b1b1b;">Color Scheme L...</div>
<div class="t" style="left:1809px;top:490.60px;font-size:11.7px;line-height:11.7px;color:#1b1b1b;">Background</div>
<div class="t" style="left:1712px;top:508.60px;font-size:11.7px;line-height:11.7px;color:#1b1b1b;">Color Scheme</div>
<div class="t" style="left:1809px;width:97px;text-align:center;top:508.60px;font-size:11.7px;line-height:11.7px;color:#1b1b1b">&lt;none&gt;</div>
<div class="t" style="left:1712px;top:526.60px;font-size:11.7px;line-height:11.7px;color:#1b1b1b;">Default Analysis...</div>
<div class="t" style="left:1809px;top:526.60px;font-size:11.7px;line-height:11.7px;color:#1b1b1b;">None</div>
<div class="t" style="left:1712px;top:544.60px;font-size:11.7px;line-height:11.7px;color:#1b1b1b;">Sun Path</div>
<div class="a" style="left:1704px;top:560px;width:216px;height:18px;background:#dadada;"></div>
<div class="t" style="left:1706px;top:564.10px;font-size:11.7px;line-height:11.7px;color:#1b1b1b;">Extents</div>
<div class="t" style="left:1712px;top:580.60px;font-size:11.7px;line-height:11.7px;color:#1b1b1b;">Crop View</div>
<div class="t" style="left:1712px;top:598.60px;font-size:11.7px;line-height:11.7px;color:#1b1b1b;">Crop Region Vis...</div>
<div class="t" style="left:1712px;top:616.60px;font-size:11.7px;line-height:11.7px;color:#1b1b1b;">Annotation Crop</div>
<div class="t" style="left:1712px;top:634.60px;font-size:11.7px;line-height:11.7px;color:#1b1b1b;">Far Clipping</div>
<div class="t" style="left:1812px;top:634.60px;font-size:11.7px;line-height:11.7px;color:#1b1b1b;">Clip without line</div>
<div class="t" style="left:1712px;top:652.60px;font-size:11.7px;line-height:11.7px;color:#1b1b1b;">Far Clip Offset</div>
<div class="t" style="left:1809px;top:652.60px;font-size:11.7px;line-height:11.7px;color:#1b1b1b;">2547.1</div>
<div class="t" style="left:1712px;top:670.60px;font-size:11.7px;line-height:11.7px;color:#1b1b1b;">Scope Box</div>
<div class="t" style="left:1809px;top:670.60px;font-size:11.7px;line-height:11.7px;color:#1b1b1b;">None</div>
<div class="a" style="left:1704px;top:686px;width:216px;height:18px;background:#dadada;"></div>
<div class="t" style="left:1706px;top:690.10px;font-size:11.7px;line-height:11.7px;color:#1b1b1b;">Identity Data</div>
<div class="t" style="left:1712px;top:706.60px;font-size:11.7px;line-height:11.7px;color:#1b1b1b;">View Template</div>
<div class="t" style="left:1809px;width:97px;text-align:center;top:706.60px;font-size:11.7px;line-height:11.7px;color:#1b1b1b">&lt;None&gt;</div>
<div class="t" style="left:1712px;top:724.60px;font-size:11.7px;line-height:11.7px;color:#1b1b1b;">View Name</div>
<div class="t" style="left:1809px;top:724.60px;font-size:11.7px;line-height:11.7px;color:#1b1b1b;">Section 1</div>
<div class="t" style="left:1712px;top:742.60px;font-size:11.7px;line-height:11.7px;color:#8c8c8c;">Dependency</div>
<div class="t" style="left:1809px;top:742.60px;font-size:11.7px;line-height:11.7px;color:#8c8c8c;">Independent</div>
<div class="t" style="left:1712px;top:760.60px;font-size:11.7px;line-height:11.7px;color:#1b1b1b;">Title on Sheet</div>
<div class="t" style="left:1712px;top:778.60px;font-size:11.7px;line-height:11.7px;color:#8c8c8c;">Referencing Sh...</div>
<div class="t" style="left:1712px;top:796.60px;font-size:11.7px;line-height:11.7px;color:#8c8c8c;">Referencing Det...</div>
<div class="a" style="left:1704px;top:812px;width:216px;height:18px;background:#dadada;"></div>
<div class="t" style="left:1706px;top:816.10px;font-size:11.7px;line-height:11.7px;color:#1b1b1b;">Phasing</div>
<div class="t" style="left:1712px;top:832.60px;font-size:11.7px;line-height:11.7px;color:#1b1b1b;">Phase Filter</div>
<div class="t" style="left:1809px;top:832.60px;font-size:11.7px;line-height:11.7px;color:#1b1b1b;">Show All</div>
<div class="t" style="left:1712px;top:850.60px;font-size:11.7px;line-height:11.7px;color:#1b1b1b;">Phase</div>
<div class="t" style="left:1809px;top:850.60px;font-size:11.7px;line-height:11.7px;color:#1b1b1b;">New Construction</div>
<div class="a" style="left:1704px;top:866px;width:216px;height:114px;background:#ffffff;"></div>
<div class="a" style="left:1702px;top:980px;width:218px;height:28px;background:#efefef;"></div>
<div class="t" style="left:1706px;top:987.10px;font-size:11.7px;line-height:11.7px;color:#1a5fa8;text-decoration:underline">Properties help</div>
<svg class="a" style="left:0;top:0" width="1920" height="1080"><rect x="1846.5" y="984.5" width="70" height="18" rx="2" fill="#f3f3f3" stroke="#e6e6e6"/></svg><div class="t" style="left:1866px;top:988.10px;font-size:11.7px;line-height:11.7px;color:#9a9a9a;">Apply</div>
<svg class="a" style="left:0;top:0" width="1920" height="1080"><path d="M1906.5 297.5L1910 294.5L1913.5 297.5M1906.5 301.5L1910 298.5L1913.5 301.5" stroke="#222" stroke-width="1.3" fill="none"/><path d="M1906.5 567.5L1910 564.5L1913.5 567.5M1906.5 571.5L1910 568.5L1913.5 571.5" stroke="#222" stroke-width="1.3" fill="none"/><path d="M1906.5 693.5L1910 690.5L1913.5 693.5M1906.5 697.5L1910 694.5L1913.5 697.5" stroke="#222" stroke-width="1.3" fill="none"/><path d="M1906.5 819.5L1910 816.5L1913.5 819.5M1906.5 823.5L1910 820.5L1913.5 823.5" stroke="#222" stroke-width="1.3" fill="none"/></svg>

<!-- status bar -->
<div class="a" style="left:0;top:1008px;width:1920px;height:25px;background:#cbcbcb"></div>
<div class="t" style="left:2px;top:1013px;font-size:11.4px">Walls : Basic Wall : Generic - 200mm 2 : R0</div>

<!-- taskbar -->
<div class="a" style="left:0;top:1033px;width:1920px;height:47px;background:#eeebe5"></div>
<svg class="a" style="left:0;top:0" width="1920" height="1080"><path d="M896.5 1020.5L899 1018.5H905.5V1026.5L903 1028.5H896.5Z" fill="#a8d4f2" stroke="#2d5f86" stroke-width="0.9"/><path d="M896.5 1020.5H903V1028.5M903 1020.5L905.5 1018.5" stroke="#2d5f86" fill="none" stroke-width="0.9"/><path d="M900.5 1015.5L902.5 1013.5H908.5V1019L906.5 1021H900.5Z" fill="#c7e8a0" stroke="#4a7a3a" stroke-width="0.9"/><path d="M908.5 1020V1028M906.5 1020Q906 1017 908.5 1016.5Q911 1017 910.5 1020" stroke="#222" fill="none" stroke-width="1.4"/><rect x="920" y="1012" width="204" height="17" fill="#ffffff"/><path d="M1112.5 1012V1029" stroke="#f0f0f0"/><path d="M1114 1018L1117.5 1021.5L1121 1018" stroke="#999" fill="none"/><path d="M1138 1014H1147V1019H1143L1140 1024V1028H1135L1138 1022Z" fill="#b0b0b0"/><rect x="1186.5" y="1013.5" width="15" height="14" fill="#fff" stroke="#333a42" stroke-width="1.2"/><path d="M1186.5 1016.5H1201.5" stroke="#333a42" stroke-width="1.5"/><path d="M1189 1020H1191M1193 1020H1199M1189 1023H1191M1193 1023H1199M1193 1026H1199" stroke="#333a42"/><rect x="1212" y="1013" width="16" height="15" fill="#a9a9a9"/><path d="M1213 1021H1221M1218 1018L1221 1021L1218 1024M1213 1027H1228" stroke="#e8e8e8" fill="none"/><rect x="1236" y="1012" width="204" height="17" fill="#ffffff"/><path d="M1429 1018L1432.5 1021.5L1436 1018" stroke="#999" fill="none"/><ellipse cx="1673" cy="1018" rx="4.5" ry="2.8" fill="none" stroke="#d7b03a" stroke-width="1.8"/><ellipse cx="1679" cy="1018" rx="4.5" ry="2.8" fill="none" stroke="#d7b03a" stroke-width="1.8"/><path d="M1695 1022L1703 1014V1023M1695 1026H1703" stroke="#2d80c0" fill="none" stroke-width="1.3"/><path d="M1704 1013L1710 1019M1710 1013L1704 1019" stroke="#c0392b" stroke-width="1.6"/><rect x="1721" y="1013" width="7" height="3" fill="#f0c08a" stroke="#9a6a3a" stroke-width="0.8"/><rect x="1722" y="1016" width="5" height="5" fill="#f0c08a" stroke="#9a6a3a" stroke-width="0.8"/><path d="M1719 1021.5H1730M1724.5 1022V1028" stroke="#555"/><path d="M1747 1015L1754 1013V1026L1747 1028Z" fill="#a8d2f0" stroke="#2d5f86"/><path d="M1775 1016H1783M1779 1012V1020M1776.5 1014L1775 1016L1776.5 1018M1781.5 1014L1783 1016L1781.5 1018" stroke="#111" fill="none" stroke-width="1.2"/><circle cx="1805.5" cy="1021" r="5.5" fill="none" stroke="#aaa" stroke-width="1.6" stroke-dasharray="2 1.5"/><path d="M1821 1014H1838L1831.5 1021V1028H1827.5V1021Z" fill="#c8c8c8" stroke="#555" stroke-width="1.1"/><path d="M1674 1019V1028L1676 1026L1678 1029.5L1679 1029L1677 1025.5H1680Z" fill="#fff" stroke="#222" stroke-width="0.8"/><path d="M1705 1019V1028L1707 1026L1709 1029.5L1710 1029L1708 1025.5H1711Z" fill="#fff" stroke="#222" stroke-width="0.8"/><path d="M1730 1019V1028L1732 1026L1734 1029.5L1735 1029L1733 1025.5H1736Z" fill="#fff" stroke="#222" stroke-width="0.8"/><path d="M1756 1019V1028L1758 1026L1760 1029.5L1761 1029L1759 1025.5H1762Z" fill="#fff" stroke="#222" stroke-width="0.8"/><path d="M1782 1019V1028L1784 1026L1786 1029.5L1787 1029L1785 1025.5H1788Z" fill="#fff" stroke="#222" stroke-width="0.8"/></svg>
<div class="t" style="left:1153px;top:1015.10px;font-size:11.7px;line-height:11.7px;color:#222;">:0</div>
<div class="t" style="left:1238px;top:1015.10px;font-size:11.7px;line-height:11.7px;color:#8a8a8a;">Main Model</div>
<div class="t" style="left:1839px;top:1015.10px;font-size:11.7px;line-height:11.7px;color:#222;">:1</div>
<svg class="a" style="left:0;top:0" width="1920" height="1080"><g><rect x="21" y="1045" width="11" height="11" fill="#2a9fe0"/><rect x="33" y="1045" width="11" height="11" fill="#1f8fd8"/><rect x="21" y="1057" width="11" height="11" fill="#1f8fd8"/><rect x="33" y="1057" width="11" height="11" fill="#1a7fcc"/></g><rect x="59.5" y="1041.5" width="97" height="30" rx="15" fill="#faf8f4" stroke="#e6e3dd"/><circle cx="87" cy="1054" r="4.6" fill="none" stroke="#222" stroke-width="1.5"/><path d="M90.5 1057.5L94 1061" stroke="#222" stroke-width="1.6"/><rect x="178" y="1044" width="16" height="15" fill="#f4f4f4" stroke="#ddd"/><rect x="171" y="1051" width="18" height="16" fill="#1d1d1d"/><rect x="178" y="1051" width="11" height="10" fill="#b9b9b9"/><circle cx="226" cy="1058" r="9" fill="#f0a63a"/><circle cx="232" cy="1053" r="7" fill="#eeebe5"/><ellipse cx="233" cy="1061" rx="7" ry="4" fill="#c7d3e0"/><rect x="224" y="1040" width="22" height="13" rx="6" fill="#f4f2ee"/><path d="M262 1056A11 11 0 1 1 268 1066L260 1068L262 1062Z" fill="#6d6ed8"/><rect x="264" y="1052" width="10" height="8" rx="1.5" fill="#fff"/><path d="M274 1054L278 1052V1060L274 1058Z" fill="#fff"/><ellipse cx="315" cy="1056" rx="11.5" ry="12" fill="#d21b26"/><ellipse cx="315" cy="1056" rx="5" ry="8.5" fill="#eeebe5"/><defs><linearGradient id="ig" x1="0" y1="1" x2="1" y2="0"><stop offset="0" stop-color="#f7b733"/><stop offset="0.5" stop-color="#d62e7c"/><stop offset="1" stop-color="#7a3fc0"/></linearGradient></defs><rect x="347" y="1044" width="24" height="24" rx="6" fill="url(#ig)"/><rect x="351.5" y="1048.5" width="15" height="15" rx="4" fill="none" stroke="#fff" stroke-width="1.8"/><circle cx="359" cy="1056" r="3.5" fill="none" stroke="#fff" stroke-width="1.8"/><path d="M391 1046H400L402 1048H415V1067H391Z" fill="#f4c542"/><rect x="391" y="1049" width="24" height="18" fill="#ffd95a"/><rect x="396" y="1060" width="14" height="7" rx="2" fill="#1f6fb8"/><rect x="435.5" y="1047.5" width="23" height="17" fill="#e4eef6" stroke="#9ab"/><path d="M436 1062L441 1058L444 1050L447 1059L450 1056L453 1051L456 1062Z" fill="#b7d4ea" stroke="#4a7aa6" stroke-width="0.8"/><rect x="480" y="1045" width="22" height="22" rx="4" fill="#001e36"/><circle cx="535" cy="1056" r="12" fill="#1a7fd0"/><path d="M535 1044A12 12 0 0 1 547 1056Q547 1062 540 1062Q534 1062 534 1057Q534 1053 540 1053" fill="#50c878"/><circle cx="537" cy="1058" r="4" fill="#eeebe5"/><rect x="568" y="1045" width="22" height="22" rx="3" fill="#2a0a3a" stroke="#b58ae0"/><rect x="613" y="1044" width="20" height="24" rx="2" fill="#3a9fd0"/><rect x="615" y="1061" width="16" height="5" fill="#1c5a7a"/><circle cx="667" cy="1056" r="12" fill="#1ed760"/><path d="M660 1051Q667 1048 674 1052M661 1055Q667 1053 673 1056M662 1059Q667 1057 672 1060" stroke="#111" stroke-width="2" fill="none"/><circle cx="710" cy="1055" r="11" fill="#dcdcdc"/><path d="M700 1051Q710 1045 720 1052M699.5 1056Q710 1050 721 1057" stroke="#8a8a9a" stroke-width="2.2" fill="none"/><rect x="703" y="1062" width="14" height="6" rx="1" fill="#222"/><rect x="744" y="1045" width="21" height="22" rx="1" fill="#4a7e98"/><path d="M745 1050Q752 1054 763 1046" stroke="#fff" stroke-width="1.3" fill="none"/><path d="M748 1054Q750 1050 754 1052M756 1050Q758 1047 761 1049" stroke="#fff" fill="none"/><rect x="787" y="1045" width="22" height="22" rx="2" fill="#f6d7a0" stroke="#c8b89a"/><circle cx="797" cy="1056" r="6" fill="#f0a030"/><path d="M795 1052L801 1056L795 1060Z" fill="#fff"/><rect x="831" y="1045" width="22" height="22" rx="4" fill="#00005b"/><rect x="875" y="1045" width="22" height="22" rx="2" fill="#001e36" stroke="#31a8ff"/><path d="M922 1046H932Q939 1046 939 1053Q939 1058 935 1059L940 1067H934L930 1060H928V1067H922Z" fill="#2f6fb8"/><rect x="963" y="1044" width="23" height="24" rx="3" fill="#c8102e"/><rect x="963" y="1062" width="23" height="6" fill="#8a0a1e"/><circle cx="1018" cy="1055" r="11" fill="#3a9ad8"/><circle cx="1013" cy="1051" r="2.5" fill="#f4c542"/><circle cx="1021" cy="1049" r="2.5" fill="#e74c3c"/><circle cx="1015" cy="1059" r="2.5" fill="#2ecc71"/><path d="M1022 1068L1028 1054" stroke="#6a4a2a" stroke-width="2"/><rect x="311" y="1071" width="6" height="3" rx="1.5" fill="#7a7a7a"/><rect x="399" y="1071" width="6" height="3" rx="1.5" fill="#7a7a7a"/><rect x="664" y="1071" width="6" height="3" rx="1.5" fill="#7a7a7a"/><rect x="927" y="1071" width="6" height="3" rx="1.5" fill="#7a7a7a"/><rect x="1015" y="1071" width="6" height="3" rx="1.5" fill="#7a7a7a"/><path d="M1677 1060L1682 1055L1687 1060" stroke="#222" stroke-width="1.3" fill="none"/><path d="M1747 1053Q1754 1047 1761 1053M1749.5 1056Q1754 1052 1758.5 1056M1752 1059Q1754 1057.5 1756 1059" stroke="#222" stroke-width="1.4" fill="none"/><circle cx="1754" cy="1061.5" r="1.2" fill="#222"/><path d="M1771 1054H1774L1778 1050V1064L1774 1060H1771Z" fill="none" stroke="#222" stroke-width="1.2"/><path d="M1780 1054Q1782 1057 1780 1060" stroke="#999" fill="none"/><rect x="1796" y="1052" width="13" height="9" rx="1" fill="#222"/><path d="M1809 1055H1811V1058H1809" fill="#222"/><path d="M1797 1051L1800 1048" stroke="#222"/><circle cx="1891" cy="1056" r="8" fill="#1c5fa8"/></svg>
<div class="t" style="left:100px;top:1050.68px;font-size:11.6px;line-height:11.6px;color:#1e1e1e;">Search</div>
<div class="t" style="left:227px;top:1042.20px;font-size:10.4px;line-height:10.4px;color:#111;">83°</div>
<div class="t" style="left:483px;top:1050.27px;font-size:11.5px;line-height:11.5px;color:#8ac8ff;font-weight:bold;letter-spacing:-0.5px">Lrc</div>
<div class="t" style="left:571px;top:1049.84px;font-size:12px;line-height:12px;color:#e0a8ff;font-weight:bold">Pr</div>
<div class="t" style="left:834px;top:1049.84px;font-size:12px;line-height:12px;color:#9999ff;font-weight:bold">Ae</div>
<div class="t" style="left:878px;top:1049.84px;font-size:12px;line-height:12px;color:#31a8ff;font-weight:bold">Ps</div>
<div class="t" style="left:619px;top:1047.84px;font-size:12px;line-height:12px;color:#fff;font-weight:bold">3</div>
<div class="t" style="left:970px;top:1048.00px;font-size:13px;line-height:13px;color:#fff;font-weight:bold">A</div>
<div class="t" style="left:1705px;top:1050.43px;font-size:11.3px;line-height:11.3px;color:#1e1e1e;">ENG</div>
<div class="t" style="left:1829px;top:1042.43px;font-size:11.3px;line-height:11.3px;color:#1e1e1e;">10:15 AM</div>
<div class="t" style="left:1829px;top:1058.43px;font-size:11.3px;line-height:11.3px;color:#1e1e1e;">3/7/2023</div>
<div class="t" style="left:1887.5px;top:1051.54px;font-size:10px;line-height:10px;color:#fff;">2</div>
<div class="t" style="left:615.5px;top:1061.34px;font-size:5.5px;line-height:5.5px;color:#fff;font-weight:bold">MAX</div>
<div class="t" style="left:704px;top:1061.42px;font-size:6px;line-height:6px;color:#fff;font-weight:bold">Pro</div>
<div class="t" style="left:750px;top:1059.23px;font-size:8px;line-height:8px;color:#fff;font-weight:bold">12</div>
<div class="t" style="left:968.5px;top:1061.84px;font-size:5.5px;line-height:5.5px;color:#fff;font-weight:bold">CAD</div>

</body></html>
